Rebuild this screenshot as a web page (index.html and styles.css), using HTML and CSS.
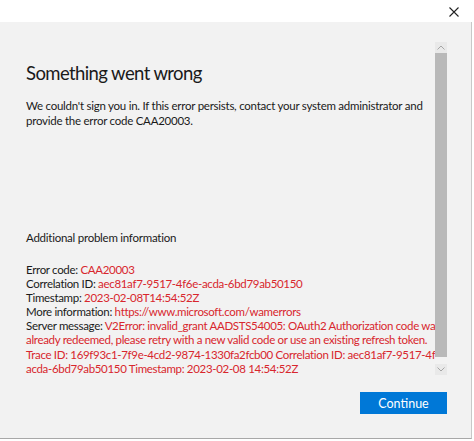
FILE: index.html
```html
<!DOCTYPE html>
<html>
<head>
<meta charset="utf-8">
<link rel="stylesheet" href="styles.css">
</head>
<body>
<div class="window">
  <div class="titlebar">
    <button class="close" aria-label="Close">
      <svg width="10" height="10" viewBox="0 0 10 10"><path d="M0.5 0.5 L9.5 9.5 M9.5 0.5 L0.5 9.5" stroke="#222" stroke-width="1.1" fill="none"/></svg>
    </button>
  </div>
  <div class="panel">
    <div class="main">
      <div class="pane">
        <h1 class="title">Something went wrong</h1>
        <div class="msg">
          <div class="line">We couldn't sign you in. If this error persists, contact your system administrator and</div>
          <div class="line">provide the error code CAA20003.</div>
        </div>
        <div class="addl">Additional problem information</div>
        <div class="info">
          <div class="line">Error code: <span class="red">CAA20003</span></div>
          <div class="line">Correlation ID: <span class="red">aec81af7-9517-4f6e-acda-6bd79ab50150</span></div>
          <div class="line">Timestamp: <span class="red">2023-02-08T14:54:52Z</span></div>
          <div class="line">More information: <span class="red">https://www.microsoft.com/wamerrors</span></div>
          <div class="line">Server message: <span class="red">V2Error: invalid_grant AADSTS54005: OAuth2 Authorization code was</span></div>
          <div class="line red">already redeemed, please retry with a new valid code or use an existing refresh token.</div>
          <div class="line red">Trace ID: 169f93c1-7f9e-4cd2-9874-1330fa2fcb00 Correlation ID: aec81af7-9517-4f6e-</div>
          <div class="line red">acda-6bd79ab50150 Timestamp: 2023-02-08 14:54:52Z</div>
        </div>
      </div>
      <div class="scrollbar">
        <div class="arrow up"><svg width="8" height="5" viewBox="0 0 8 5"><path d="M0.5 4.5 L4 1 L7.5 4.5" stroke="#a6a6a6" stroke-width="1" fill="none"/></svg></div>
        <div class="track"><div class="thumb"></div></div>
        <div class="arrow down"><svg width="8" height="5" viewBox="0 0 8 5"><path d="M0.5 0.5 L4 4 L7.5 0.5" stroke="#a6a6a6" stroke-width="1" fill="none"/></svg></div>
      </div>
    </div>
    <div class="actions">
      <button class="btn">Continue</button>
    </div>
  </div>
</div>
</body>
</html>
```
FILE: styles.css
```css
html, body {
  margin: 0;
  padding: 0;
  background: #ffffff;
}
body {
  width: 474px;
  height: 441px;
  overflow: hidden;
  font-family: Lato, "Noto Sans", sans-serif;
  color: #1a1a1a;
}
.window {
  width: 472px;
  display: flex;
  flex-direction: column;
}
.titlebar {
  height: 22px;
  background: #ffffff;
  display: flex;
  justify-content: flex-end;
  align-items: center;
}
.close {
  border: 0;
  background: transparent;
  padding: 0;
  margin: 1px 13px 0 0;
  width: 10px;
  height: 10px;
  display: flex;
}
.panel {
  width: 471px;
  height: 416px;
  background: #f2f2f2;
  border-right: 1px solid #c8c8c8;
  border-bottom: 1px solid #a8a8a8;
  display: flex;
  flex-direction: column;
}
.main {
  display: flex;
  height: 354px;
}
.pane {
  flex: 1;
  padding-left: 26px;
  overflow: hidden;
  min-width: 0;
}
.title {
  margin: 38px 0 0 0;
  font-size: 18.5px;
  font-weight: 400;
  line-height: 26px;
  letter-spacing: -0.6px;
  color: #1a1a1a;
}
.line {
  white-space: nowrap;
}
.msg, .addl, .info {
  font-size: 11.5px;
  letter-spacing: -0.25px;
}
.info {
  letter-spacing: -0.32px;
}
.msg {
  margin-top: 12px;
  line-height: 15px;
}
.addl {
  margin-top: 102px;
  line-height: 15px;
}
.info {
  margin-top: 18px;
  line-height: 14.1px;
}
.red {
  color: #d8262d;
}
.scrollbar {
  width: 12px;
  margin: 20px 24px 0 0;
  display: flex;
  flex-direction: column;
  height: 333px;
}
.arrow {
  height: 11px;
  display: flex;
  align-items: center;
  justify-content: center;
  background: #e9e9e9;
}
.track {
  flex: 1;
  display: flex;
  flex-direction: column;
}
.thumb {
  height: 304px;
  background: #b9b9b9;
}
.actions {
  display: flex;
  justify-content: flex-end;
  padding: 16px 24px 0 0;
}
.btn {
  width: 87px;
  height: 22px;
  border: 0;
  background: #0078d7;
  color: #ffffff;
  font-family: Lato, "Noto Sans", sans-serif;
  font-size: 12.5px;
  padding: 0;
}
```
